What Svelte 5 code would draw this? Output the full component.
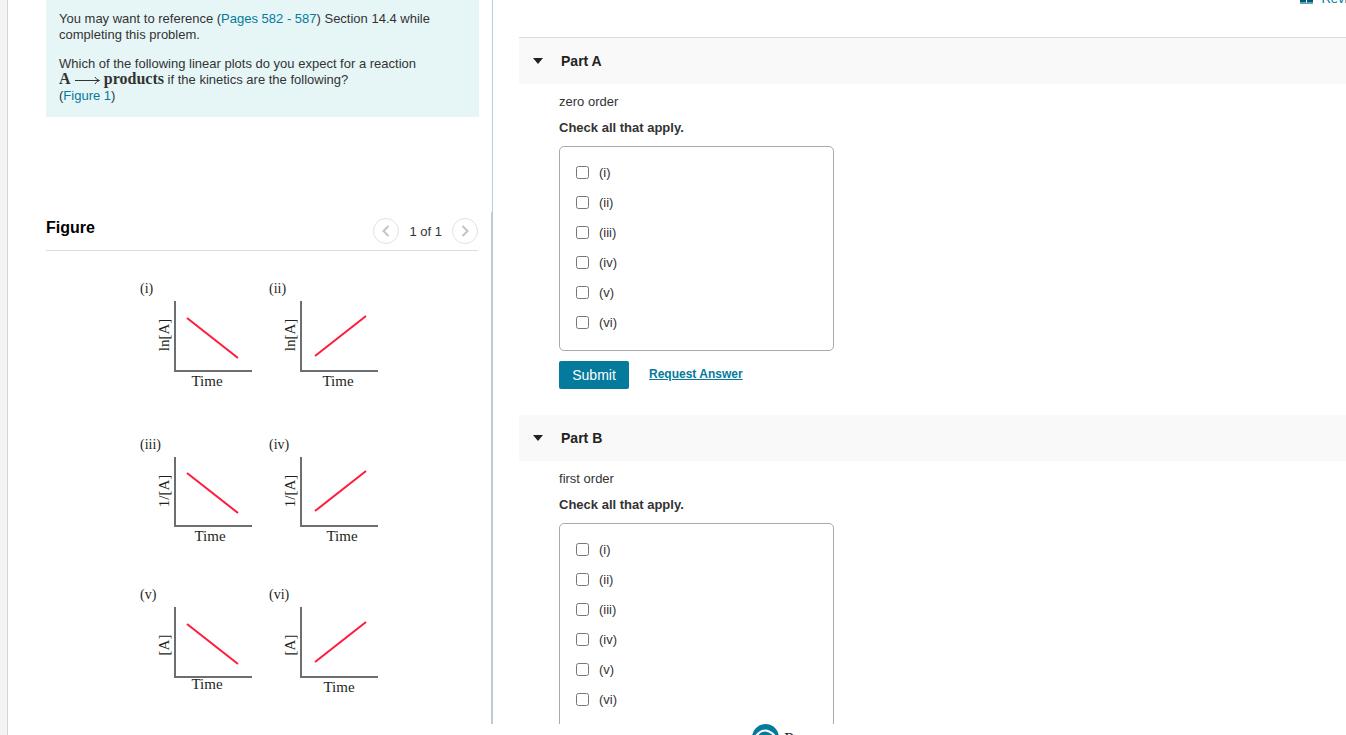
<script lang="ts">
  type Plot = {
    label: string;
    yAxis: string;
    x: number;
    y: number;
    rising: boolean;
    height: number;
    time: [number, number];
  };

  const options = ['(i)', '(ii)', '(iii)', '(iv)', '(v)', '(vi)'];

  const parts = [
    { id: 'a', title: 'Part A', prompt: 'zero order' },
    { id: 'b', title: 'Part B', prompt: 'first order' }
  ];

  // x / y is the top of the vertical axis, time is the x-axis caption
  const plots: Plot[] = [
    { label: '(i)', yAxis: 'ln[A]', x: 129, y: 50, rising: false, height: 70, time: [161, 135] },
    { label: '(ii)', yAxis: 'ln[A]', x: 255, y: 50, rising: true, height: 70, time: [292, 135] },
    { label: '(iii)', yAxis: '1/[A]', x: 129, y: 206, rising: false, height: 69, time: [164, 290] },
    { label: '(iv)', yAxis: '1/[A]', x: 255, y: 206, rising: true, height: 69, time: [296, 290] },
    { label: '(v)', yAxis: '[A]', x: 129, y: 356, rising: false, height: 70, time: [161, 438] },
    { label: '(vi)', yAxis: '[A]', x: 255, y: 356, rising: true, height: 70, time: [293, 441] }
  ];

  let checked: Record<string, string[]> = $state({ a: [], b: [] });
  let open: Record<string, boolean> = $state({ a: true, b: true });
</script>

<div class="page">
  <div class="columns">
    <aside class="left">
      <section class="problem">
        <div class="intro">
          <p>
            You may want to reference (<a href="#pages">Pages 582 - 587</a>) Section 14.4 while
            completing this problem.
          </p>
          <p>
            Which of the following linear plots do you expect for a reaction<br />
            <span class="math">A</span>
            <svg class="arrow" width="26" height="9" viewBox="0 0 26 9" aria-hidden="true">
              <path d="M1 4.500H25M21 1Q22.500 4 25.500 4.500Q22.500 5 21 8" fill="none" stroke="currentColor" />
            </svg>
            <span class="math">products</span> if the kinetics are the following?<br />
            (<a href="#figure">Figure 1</a>)
          </p>
        </div>
      </section>

      <section class="figure" id="figure">
        <header class="figure-header">
          <h2>Figure</h2>
          <div class="pager">
            <button class="round" aria-label="Previous figure">
              <svg width="12" height="14" viewBox="0 0 12 14"><path d="M8.500 2L3.500 7L8.500 12" /></svg>
            </button>
            <span>1 of 1</span>
            <button class="round" aria-label="Next figure">
              <svg width="12" height="14" viewBox="0 0 12 14"><path d="M3.500 2L8.500 7L3.500 12" /></svg>
            </button>
          </div>
        </header>

        <svg class="plots" viewBox="0 0 432 473">
          {#each plots as plot}
            <text class="label" x={plot.x < 200 ? 94 : 223} y={plot.y - 8}>{plot.label}</text>
            <text
              text-anchor="middle"
              transform="translate({plot.x - 6} {plot.y + (plot.yAxis === '[A]' ? 38 : 34)}) rotate(-90)"
            >{plot.yAxis}</text>
            <path class="axis" d="M{plot.x} {plot.y}v{plot.height}h77" />
            {#if plot.rising}
              <path class="line" d="M{plot.x + 14} {plot.y + plot.height - 15}l51 -40" />
            {:else}
              <path class="line" d="M{plot.x + 12} {plot.y + plot.height - 53}l51 40" />
            {/if}
            <text text-anchor="middle" x={plot.time[0]} y={plot.time[1]}>Time</text>
          {/each}
        </svg>
      </section>
    </aside>

    <main class="right">
      <nav class="toolbar">
        <a href="#review">
          <svg width="13" height="12" viewBox="0 0 13 12" aria-hidden="true">
            <path d="M0 0h6v10H0zM7 0h6v10H7z" fill="#005a70" />
            <path d="M0 9h6l.5 1 .5-1h6v2H0z" fill="#5fa3b3" />
          </svg>
          Review
        </a>
      </nav>

      {#each parts as part}
        <section class="part">
          <h3>
            <button class="part-header" aria-expanded={open[part.id]} onclick={() => (open[part.id] = !open[part.id])}>
              <span class="caret"></span>
              {part.title}
            </button>
          </h3>
          {#if open[part.id]}
            <div class="part-body">
              <p>{part.prompt}</p>
              <p class="instruction">Check all that apply.</p>
              <div class="options">
                {#each options as option}
                  <label>
                    <input type="checkbox" value={option} bind:group={checked[part.id]} />
                    <span>{option}</span>
                  </label>
                {/each}
              </div>
              <div class="actions">
                <button class="submit">Submit</button>
                <a href="#answer">Request Answer</a>
              </div>
            </div>
          {/if}
        </section>
      {/each}
    </main>
  </div>

  <footer>
    <svg width="27" height="27" viewBox="0 0 27 27" aria-hidden="true">
      <circle cx="13.500" cy="13.500" r="13.500" fill="#047a9c" />
      <path d="M4 12Q13 1 23 12" fill="none" stroke="#fff" stroke-width="2" />
    </svg>
    <span>Pearson</span>
  </footer>
</div>

<style>
  :global(body) {
    margin: 0;
    background: #fff;
  }

  .page {
    display: flex;
    flex-direction: column;
    height: 100vh;
    overflow: hidden;
    box-sizing: border-box;
    border-left: 7px solid #f4f4f4;
    font: 13px/16px "Liberation Sans", Arial, sans-serif;
    color: #333;
  }

  .columns,
  footer {
    border-left: 1px solid #d5d5d5;
  }

  .columns {
    display: flex;
    flex: 1;
    min-height: 0;
  }

  p, h2, h3 {
    margin: 0;
  }

  a {
    color: #047a9c;
    text-decoration: none;
  }

  button {
    font-family: inherit;
    cursor: pointer;
  }

  .left {
    display: flex;
    flex-direction: column;
    flex: 0 0 36.25%;
  }

  .problem {
    box-sizing: border-box;
    height: 212px;
    flex-shrink: 0;
    padding: 0 13px 0 38px;
    border-right: 1px solid #b8cce0;
  }

  .intro {
    display: flex;
    flex-direction: column;
    gap: 13px;
    padding: 11px 13px 13px;
    background: #e6f6f7;
  }

  .math {
    font: bold 16px/14px "Liberation Serif", serif;
  }

  .arrow {
    vertical-align: -1px;
  }

  .figure {
    flex: 1;
    min-height: 0;
    overflow: hidden;
    padding: 0 13px 0 38px;
    border-right: 2px solid #b8cce0;
  }

  .figure-header {
    display: flex;
    justify-content: space-between;
    height: 38px;
    border-bottom: 1px solid #ddd;
  }

  h2 {
    font-size: 16px;
    line-height: 31px;
    color: #000;
  }

  .pager {
    display: flex;
    align-items: center;
    gap: 10px;
    line-height: 18px;
  }

  .pager span {
    padding-top: 2px;
  }

  .round {
    display: flex;
    align-items: center;
    justify-content: center;
    width: 26px;
    height: 26px;
    padding: 0;
    border: 1px solid #e2e2e2;
    border-radius: 50%;
    background: #fff;
  }

  .round path {
    fill: none;
    stroke: #c4c4c4;
    stroke-width: 2;
  }

  .plots {
    display: block;
    width: 100%;
    font: 15px "Liberation Serif", serif;
    fill: #231f20;
  }

  .label {
    font-size: 14px;
  }

  .axis {
    fill: none;
    stroke: #6d6e70;
    stroke-width: 2;
  }

  .line {
    fill: none;
    stroke: #ff1a3c;
    stroke-width: 2;
  }

  .right {
    flex: 1;
    min-width: 0;
    padding-left: 26px;
    overflow: hidden;
  }

  .toolbar {
    display: flex;
    justify-content: flex-end;
    height: 37px;
    border-bottom: 1px solid #ddd;
  }

  .toolbar a {
    display: flex;
    align-items: center;
    gap: 8px;
    height: 16px;
    margin: -9px -18px 0 0;
  }

  .part {
    padding-bottom: 26px;
  }

  .part-header {
    display: flex;
    align-items: center;
    gap: 18px;
    width: 100%;
    height: 46px;
    padding: 0 14px;
    border: 0;
    background: #f9f9f9;
    color: #222;
    font-size: 14px;
    font-weight: bold;
  }

  .caret {
    border: 5px solid transparent;
    border-top: 6px solid #222;
    border-bottom: 0;
  }

  .part-body {
    padding: 10px 40px 0;
  }

  .instruction {
    margin: 10px 0;
    font-weight: bold;
  }

  .options {
    box-sizing: border-box;
    width: 275px;
    padding: 10px 16px 13px;
    border: 1px solid #aaa;
    border-radius: 5px;
  }

  .options label {
    display: flex;
    align-items: center;
    gap: 10px;
    height: 30px;
  }

  .options span {
    padding-top: 2px;
  }

  .options input {
    width: 13px;
    height: 13px;
    margin: 0;
  }

  .actions {
    display: flex;
    gap: 20px;
    margin-top: 10px;
  }

  .submit {
    width: 70px;
    height: 28px;
    padding: 0;
    border: 0;
    border-radius: 2px;
    background: #047a9c;
    color: #fff;
    font-size: 14px;
  }

  .actions a {
    font-size: 12px;
    font-weight: bold;
    line-height: 26px;
    text-decoration: underline;
  }

  footer {
    display: flex;
    gap: 5px;
    height: 11px;
    padding-left: 744px;
    overflow: hidden;
  }

  footer svg {
    flex-shrink: 0;
  }

  footer span {
    font: 18px/32px "Liberation Serif", serif;
  }
</style>
